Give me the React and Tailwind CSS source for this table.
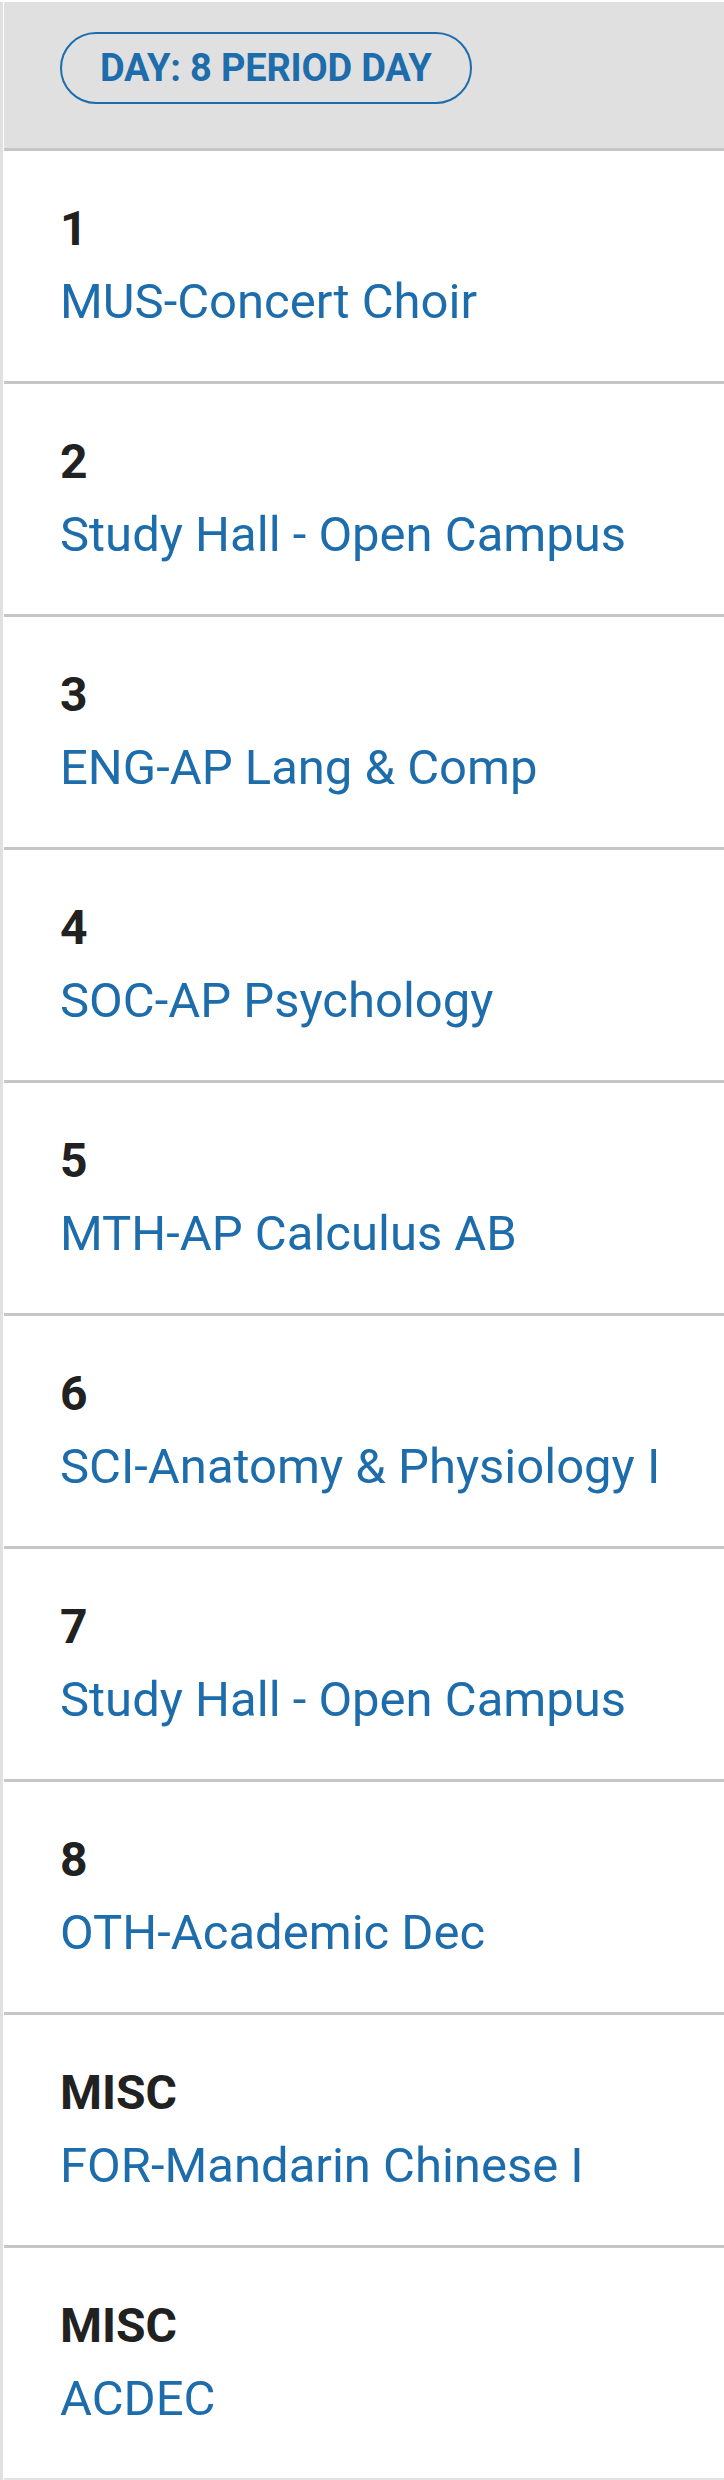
const periods = [
    { label: '1', course: 'MUS-Concert Choir' },
    { label: '2', course: 'Study Hall - Open Campus' },
    { label: '3', course: 'ENG-AP Lang & Comp' },
    { label: '4', course: 'SOC-AP Psychology' },
    { label: '5', course: 'MTH-AP Calculus AB' },
    { label: '6', course: 'SCI-Anatomy & Physiology I' },
    { label: '7', course: 'Study Hall - Open Campus' },
    { label: '8', course: 'OTH-Academic Dec' },
    { label: 'MISC', course: 'FOR-Mandarin Chinese I' },
    { label: 'MISC', course: 'ACDEC' },
];

export default function App() {
    return (
        <div
            className="min-h-screen bg-white pt-[2px]"
            style={{ fontFamily: 'Roboto, "Noto Sans", sans-serif' }}
        >
            <div className="border-l-[3px] border-[#e0e0e0] pl-px">
                {/* Day header */}
                <div className="bg-[#e0e0e0] h-[149px] border-b-[3px] border-[#c6c6c6] pt-[30px] pl-[56px]">
                    <span className="inline-flex items-center h-[72px] px-[38px] rounded-full border-2 border-[#1d6cab] text-[#1d6cab] font-bold text-[38px] tracking-[-0.2px] leading-none">
                        DAY: 8 PERIOD DAY
                    </span>
                </div>

                {/* Period list */}
                {periods.map((p, index) => (
                    <div
                        key={index}
                        className={
                            index === periods.length - 1
                                ? 'pt-[50px] pb-[51px] pl-[56px] border-b-2 border-[#e2e2e2]'
                                : 'pt-[50px] pb-[51px] pl-[56px] border-b-[3px] border-[#c6c6c6]'
                        }
                    >
                        <div className="text-[48px] leading-[56px] font-bold text-[#212121]">{p.label}</div>
                        <a href="#" className="block mt-[17px] text-[49px] leading-[56px] text-[#1d6cab]">
                            {p.course}
                        </a>
                    </div>
                ))}
            </div>
        </div>
    );
}
